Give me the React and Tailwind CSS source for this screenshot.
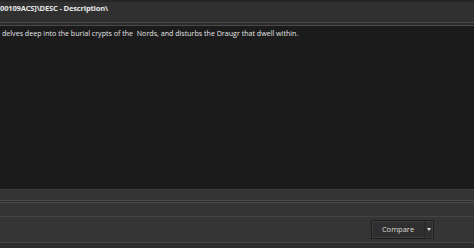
export default function App() {
  return (
    <div
      className="w-[474px] h-[248px] overflow-hidden flex flex-col bg-[#333333] text-white"
      style={{ fontFamily: '"Open Sans", "DejaVu Sans", sans-serif' }}
    >
      {/* header path */}
      <div className="h-[22px] shrink-0 bg-[#303030] border-t-2 border-[#262626] flex items-start">
        <span className="text-[7.5px] font-bold leading-[12px] tracking-[-0.15px] text-[#e8e8e8]">
          00109ACS]\DESC - Description\
        </span>
      </div>
      <div className="h-[4px] shrink-0 bg-[#2a2a2a] border-t border-b border-[#4a4a4a]" />

      {/* description text */}
      <div className="flex-1 bg-[#1b1b1b] px-[2px] pt-[2px]">
        <p className="text-[7.1px] leading-[10px] text-[#e4e4e4] whitespace-pre">
          {'delves deep into the burial crypts of the  Nords, and disturbs the Draugr that dwell within.'}
        </p>
      </div>

      {/* lower panels */}
      <div className="h-[11px] shrink-0 bg-[#333333] border-t border-[#3c3c3c]" />
      <div className="h-[3px] shrink-0 bg-[#2c2c2c] border-t border-b border-[#4b4b4b]" />
      <div className="h-[14px] shrink-0 bg-[#343434] border-b border-[#434343]" />
      <div className="flex-none h-[25px] bg-[#353535] flex items-center justify-end pr-[40px]">
        <div className="w-[63px] h-[19px] flex bg-[#2f2f2f] border border-[#1f1f1f] shadow-[inset_0_0_0_1px_#3d3d3d]">
          <div className="flex-1 flex items-center justify-center text-[7.5px] text-[#dcdcdc]">
            Compare
          </div>
          <div className="w-[9px] border-l border-[#262626] flex items-center justify-center">
            <div className="w-0 h-0 border-l-[2.5px] border-r-[2.5px] border-t-[3px] border-l-transparent border-r-transparent border-t-[#e0e0e0]" />
          </div>
        </div>
      </div>
      <div className="h-[6px] shrink-0 bg-[#2d2d2d] border-t border-[#454545]" />
    </div>
  );
}
